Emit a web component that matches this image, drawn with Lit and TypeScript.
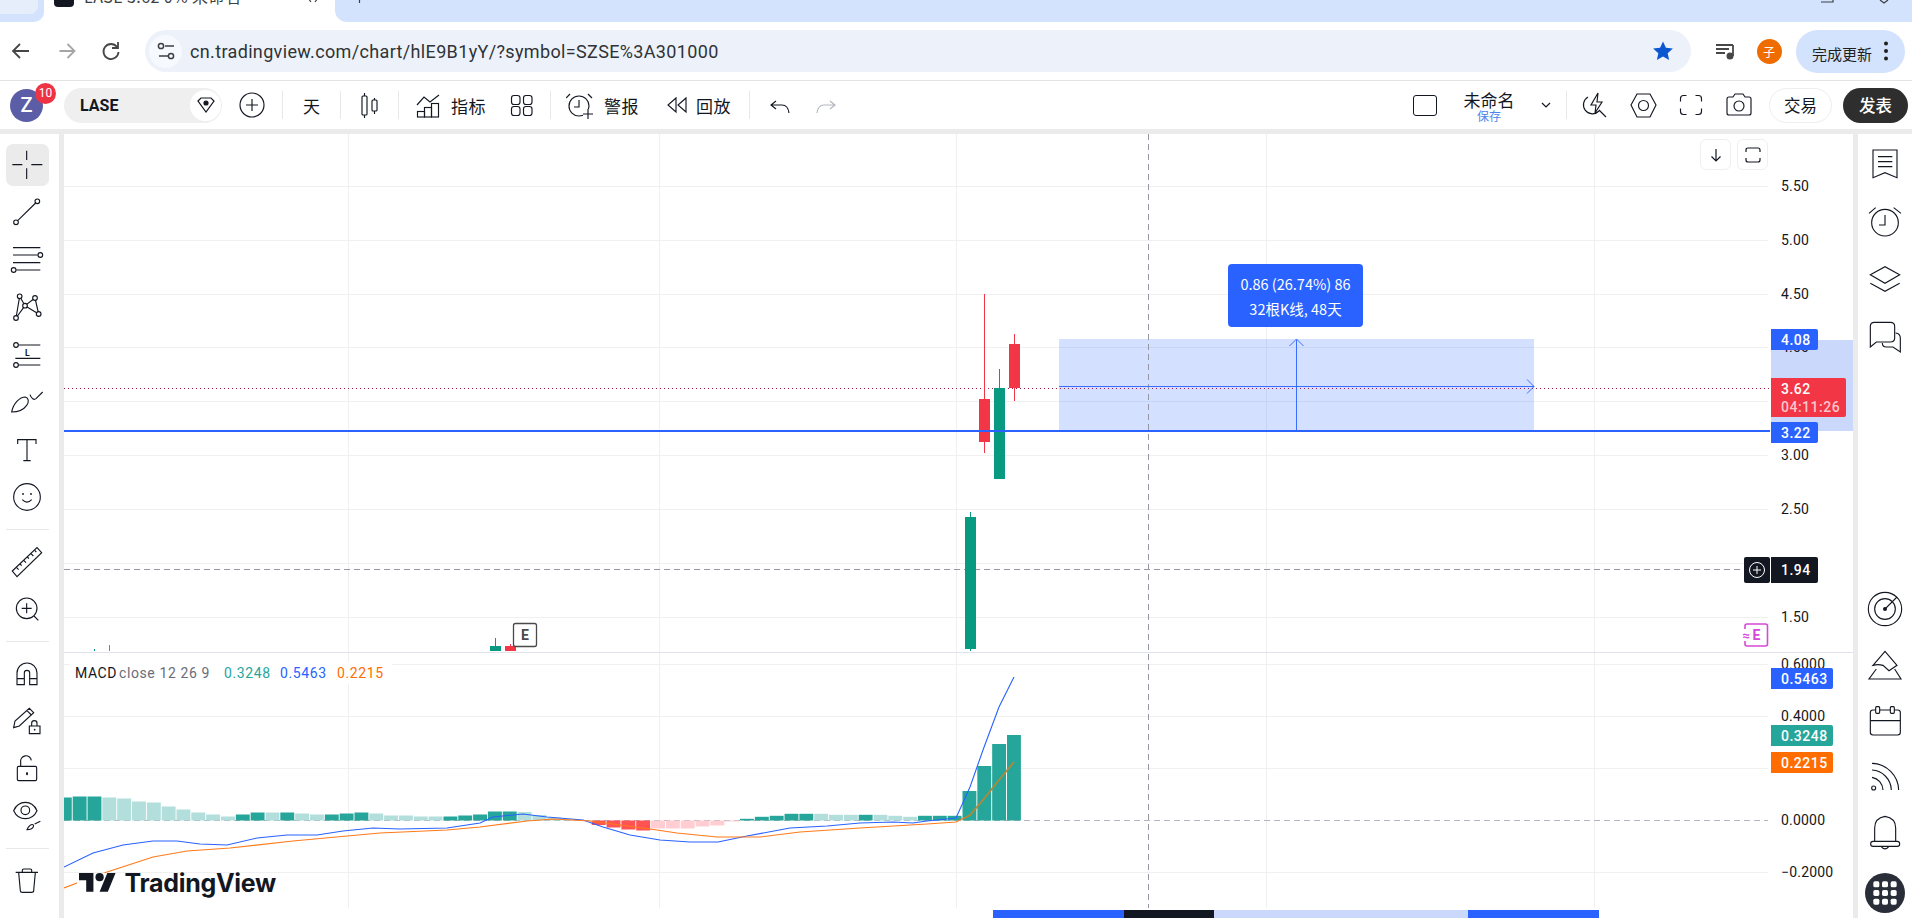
import { LitElement, html, css, svg } from "lit";
import { customElement } from "lit/decorators.js";

const tool = (cx: number, cy: number, body: unknown) => html`<svg class="zi" viewBox="${cx - 60} ${cy - 60} 120 120">${body}</svg>`;
const tb = (cx: number, cy: number, body: unknown) => html`<svg class="ti" viewBox="${cx - 14} ${cy - 14} 28 28">${body}</svg>`;

const leftA = [
  tool(82, 90, svg`<path d="M81 47V75M81 100V132M38 89H68M95 89H128"/>`),
  tool(80, 232, svg`<circle cx="47" cy="263" r="7"/><circle cx="111" cy="200" r="7"/><path d="M52 258L106 205"/>`),
  tool(80, 375, svg`<path d="M38 338H120M38 360H112M38 383H120M48 405H120"/><circle cx="120" cy="360" r="7"/><circle cx="40" cy="405" r="7"/>`),
  tool(80, 516, svg`<path d="M58 484L47 549M58 484L74 512M74 512L47 549M74 512L104 489M104 489L115 537M74 512L115 537"/><g fill="#fff"><circle cx="58" cy="484" r="7"/><circle cx="104" cy="489" r="7"/><circle cx="74" cy="512" r="7"/><circle cx="115" cy="537" r="7"/><circle cx="47" cy="549" r="7"/></g>`),
  tool(80, 660, svg`<path d="M54 630H120M45 670H120M54 690H120"/><circle cx="47" cy="630" r="7"/><circle cx="47" cy="690" r="7"/><text class="ltxt" x="81" y="662">L</text>`),
  tool(83, 805, svg`<path d="M37 835C42 808 62 790 78 790C88 792 90 805 82 815C70 832 55 835 37 835Z"/><path d="M92 783C96 795 104 800 110 795L130 775"/>`),
  tool(81, 943, svg`<path d="M53 925V912H108V925M81 912V975M70 975H92"/>`),
  tool(80, 1087, svg`<circle cx="80" cy="1087" r="40"/><circle class="f" cx="68" cy="1078" r="2.8"/><circle class="f" cx="92" cy="1078" r="2.8"/><path d="M66 1095Q80 1110 94 1095"/>`),
];
const leftB = [
  tool(80, 123, svg`<path d="M36 150L110 80L124 95L50 167Z"/><path d="M48 139L55 146M59 129L64 134M70 118L77 125M81 108L86 113M92 98L99 105M103 88L108 93"/>`),
  tool(76, 262, svg`<circle cx="75" cy="260" r="31"/><path d="M97 283L110 296M60 260H90M75 245V275"/>`),
];
const leftC = [
  tool(80, 458, svg`<path d="M50 490V455A30 30 0 0 1 110 455V490H88V455A8 8 0 0 0 72 455V490ZM50 472H72M88 472H110"/>`),
  tool(78, 600, svg`<path d="M38 620L42 600L85 562L98 575L55 615ZM78 569L91 582M85 615H117V638H85ZM92 615V607A8 8 0 0 1 108 607V615"/><circle class="f" cx="101" cy="626" r="2.5"/>`),
  tool(79, 743, svg`<path d="M54 735H104Q108 735 108 739V774Q108 778 104 778H54Q50 778 50 774V739Q50 735 54 735ZM60 735V722A16 16 0 0 1 92 717"/><ellipse class="f" cx="79" cy="757" rx="3" ry="5"/>`),
  tool(80, 884, svg`<path d="M40 868C55 835 95 835 110 868C95 900 55 900 40 868Z"/><circle cx="75" cy="867" r="13"/><path d="M80 925C84 915 92 908 98 910C102 914 98 920 92 923C88 925 84 925 80 925ZM103 908L120 900"/>`),
];
const leftD = [
  tool(80, 1076, svg`<path d="M46 1050H113M66 1050V1043Q66 1040 70 1040H90Q94 1040 94 1043V1050M55 1050L60 1105Q60 1110 66 1110H93Q100 1110 100 1105L105 1050"/>`),
];
const rightA = [
  tool(136, 102, svg`<path d="M100 60H172V143L136 128L100 143ZM115 80H158M115 95H158M115 110H158"/>`),
  tool(136, 271, svg`<circle cx="136" cy="273" r="40"/><path d="M136 250V280H118M88 245L108 228M162 228L184 245"/>`),
  tool(136, 445, svg`<path d="M92 432L136 408L180 432L136 458ZM92 458L136 482L180 458"/>`),
  tool(136, 622, svg`<path d="M92 590Q92 578 104 578H152Q165 578 165 590V625Q165 637 152 637H110L92 652ZM168 610Q182 612 182 625V667L160 652H140Q128 652 128 640"/>`),
];
const rightB = [
  tool(136, 268, svg`<circle cx="136" cy="268" r="50"/><circle cx="136" cy="268" r="31"/><circle class="f" cx="136" cy="268" r="6"/><path d="M136 268L172 232"/>`),
  tool(136, 431, svg`<path d="M100 432L136 390L172 432L148 448L130 432Q115 428 100 432ZM110 443L88 473H184L165 443"/>`),
  tool(136, 598, svg`<path d="M100 565H174Q182 565 182 573V632Q182 640 174 640H100Q92 640 92 632V573Q92 565 100 565ZM92 597H182"/><rect x="108" y="555" width="12" height="20" rx="3" fill="#fff"/><rect x="152" y="555" width="12" height="20" rx="3" fill="#fff"/>`),
  tool(136, 769, svg`<circle cx="102" cy="802" r="6"/><path d="M97 770A40 40 0 0 1 130 808M97 748A62 62 0 0 1 155 808M97 728A82 82 0 0 1 177 808"/>`),
  tool(136, 940, svg`<path d="M105 965V925Q105 895 136 890Q168 895 168 925V965"/><rect x="93" y="965" width="87" height="15" rx="7"/><path d="M124 980Q136 995 148 980"/>`),
];
const apps = tool(136, 1118, svg`<circle cx="136" cy="1118" r="60" class="dark"/><g class="wh">${[-26, 0, 26].map((dy) => [-26, 0, 26].map((dx) => svg`<rect x="${127 + dx}" y="${1109 + dy}" width="18" height="18" rx="5"/>`))}</g>`);

const hist: number[] = [23, 24, 24, 23, 22, 19, 18, 14, 11, 8, 6, 4, 6, 8, 8, 8, 7, 6, 6, 7, 8, 7, 5, 5, 4, 4, 4, 5, 6, 9, 9, 8.5, 5.5, 3, 1, 0.5, -4.5, -7, -9, -10, -8, -8, -8, -6, -5, -1, 1.7, 3.7, 4.7, 6.7, 6.7, 6.7, 5.7, 5.7, 5.7, 5.7, 4.7, 3.7, 4.7, 4.7, 4.7, 29.5, 54.5, 76.5, 85.5];
const light = new Set([3, 4, 5, 6, 7, 8, 9, 10, 11, 14, 16, 17, 21, 22, 23, 24, 25, 31, 32, 33, 34, 35, 51, 52, 53, 55, 56, 57]);
const pink = new Set([40, 41, 42, 43, 44, 45]);
const Z = 820.5;
const bars = hist.map((h, i) => {
  const x = 72.7 + (i - 1) * 14.83;
  const cls = h < 0 ? (pink.has(i) ? "#ffcdd2" : "#ff5252") : light.has(i) ? "#b2dfdb" : "#26a69a";
  const left = Math.max(64, x);
  const w = x + 13.9 - left;
  return svg`<rect x="${left}" y="${h < 0 ? Z : Z - h}" width="${w}" height="${Math.abs(h)}" fill="${cls}"/>`;
});

const blue = "64,867 93,853 123,845 153,841 177,841 200,844 227,845 257,838 287,835 317,835 343,831 373,828 400,829 447,828 480,823 493,817 523,814 547,817 583,820 603,827 630,835 660,840 690,842 718,842 747,836 790,828 827,826 860,823 893,822 913,823 927,821 956,818 970,787 983,750 999,707 1014,677";
const orange = "64,888 77,883 107,872 153,857 187,851 230,848 293,841 347,836 380,833 447,830 480,827 527,821 553,819 590,821 620,825 650,829 677,833 717,837 760,837 800,832 860,828 927,824 956,822 970,815 983,800 999,780 1014,762";

const hGrid = [186, 240, 294, 347, 401, 455, 509, 563, 617, 664, 716, 768, 872];
const vGrid = [348, 659, 956, 1266, 1594];
const axis: [string, number][] = [["5.50", 186], ["5.00", 240], ["4.50", 294], ["4.00", 347], ["3.50", 401], ["3.00", 455], ["2.50", 509], ["2.00", 563], ["1.50", 617], ["0.6000", 664], ["0.4000", 716], ["0.0000", 820], ["−0.2000", 872]];
const tags: [string, number, number, string][] = [
  ["4.08", 329, 47, "#2962ff"], ["3.22", 422, 47, "#2962ff"],
  ["0.5463", 668, 62, "#2962ff"], ["0.3248", 725, 62, "#26a69a"], ["0.2215", 752, 62, "#ff6d00"],
];
const candles: [number, number, number, number, number, string][] = [
  [970.5, 512, 651, 517, 649, "#089981"],
  [984.5, 294, 453, 399, 442, "#f23645"],
  [999.5, 369, 479, 388, 479, "#089981"],
  [1014.5, 334, 401, 344, 388, "#f23645"],
  [495.5, 638, 651, 646, 651, "#089981"],
  [510.5, 644, 651, 646, 651, "#f23645"],
];

@customElement("app-root")
export class AppRoot extends LitElement {
  static styles = css`
    :host { display: flex; flex-direction: column; width: 1912px; height: 918px; overflow: hidden; background: #ebebeb; font-family: "Noto Sans CJK SC", Roboto, sans-serif; color: #131722; }
    svg { display: block; flex: none; }
    .zi { width: 40px; height: 40px; fill: none; stroke: #131722; stroke-width: 3.4; }
    .ti { width: 28px; height: 28px; fill: none; stroke: #131722; stroke-width: 1.15; }
    .f { fill: #131722; stroke: none; }
    .dark { fill: #2a2e39; stroke: none; }
    .wh { fill: #fff; stroke: none; }
    .ltxt { font: 700 26px Roboto, sans-serif; fill: #131722; stroke: none; text-anchor: middle; }

    .tabs { display: flex; height: 22px; background: #fff; flex: none; overflow: hidden; }
    .tl { width: 44px; background: #d3e3fd; border-bottom-right-radius: 10px; }
    .stub { width: 38px; height: 14px; background: #e6eefc; border-bottom-right-radius: 8px; }
    .tab { width: 291px; display: flex; align-items: flex-start; padding-left: 10px; box-sizing: border-box; }
    .fav { width: 20px; height: 20px; margin-top: -13px; background: #131722; border-radius: 4px; }
    .ttl { font-size: 16px; line-height: 20px; margin: -14px 0 0 10px; color: #3c4043; white-space: nowrap; letter-spacing: .4px; width: 150px; }
    .tr { flex: 1; background: #d3e3fd; border-bottom-left-radius: 12px; }
    .tr svg { width: 1577px; height: 6px; fill: none; stroke: #3c4043; stroke-width: 1.2; }
    .tx { width: 14px; height: 4px; margin-left: 72px; fill: none; stroke: #3c4043; stroke-width: 1.2; }

    .addr { display: flex; align-items: center; height: 58px; background: #fff; border-bottom: 1px solid #e3e3e3; box-sizing: content-box; flex: none; padding-left: 9px; }
    .ai { width: 24px; height: 24px; fill: none; stroke: #474747; stroke-width: 1.8; }
    .ai.off { stroke: #a5a5a5; }
    .ml-fw { margin-left: 21.5px; }
    .ml-re { margin-left: 20.5px; }
    .pill { flex: 1; margin-left: 22px; height: 42px; background: #edf2fa; border-radius: 21px; display: flex; align-items: center; padding: 0 17px 0 4px; box-sizing: border-box; }
    .site { width: 33px; height: 33px; border-radius: 50%; background: #f6f9fe; display: flex; align-items: center; justify-content: center; }
    .site svg { width: 20px; height: 20px; fill: none; stroke: #3c4043; stroke-width: 1.5; }
    .url { margin-left: 8px; font: 18px Roboto, sans-serif; color: #2f3336; flex: 1; white-space: nowrap; letter-spacing: .35px; }
    .star { width: 22px; height: 22px; fill: #0b57d0; }
    .music { width: 24px; height: 24px; margin-left: 22px; fill: none; stroke: #474747; stroke-width: 1.8; }
    .ava { width: 25px; height: 25px; border-radius: 50%; background: #ef6c00; color: #fff; font-size: 12px; display: flex; align-items: center; justify-content: center; margin-left: 19.5px; }
    .upd { width: 109px; height: 43px; margin: 0 7px 0 14.5px; background: #d3e3fd; border-radius: 22px; display: flex; align-items: center; padding-left: 16px; box-sizing: border-box; font-size: 15px; color: #1f1f1f; }
    .upd span { padding-top: 4px; }
    .upd svg { width: 6px; height: 22px; margin-left: 11px; fill: #1f1f1f; }

    .tb { display: flex; align-items: center; height: 48px; background: #fff; flex: none; padding-left: 10px; font-size: 17px; }
    .avatar { position: relative; width: 33px; height: 33px; border-radius: 50%; background: #5b5ea6; color: #fff; font: 500 20px Roboto, sans-serif; display: flex; align-items: center; justify-content: center; }
    .badge { position: absolute; left: 25px; top: -6px; width: 21px; height: 21px; border-radius: 50%; background: #ee3344; font: 12px Roboto, sans-serif; display: flex; align-items: center; justify-content: center; }
    .sym { width: 158px; height: 35px; margin-left: 21px; background: #efefef; border-radius: 18px; display: flex; align-items: center; justify-content: space-between; padding: 0 1px 0 16px; box-sizing: border-box; font: 700 16px Roboto, sans-serif; }
    .sym div { width: 31px; height: 31px; border-radius: 50%; background: #fff; display: flex; align-items: center; justify-content: center; }
    .sym svg { width: 20px; height: 16px; fill: none; stroke: #131722; stroke-width: 1.2; }
    .add { width: 60px; display: flex; justify-content: center; }
    .sep { width: 1px; height: 28px; background: #e8e8e8; flex: none; }
    .cell { width: 57px; display: flex; justify-content: center; }
    .lbl { width: 35px; letter-spacing: .5px; white-space: nowrap; }
    .in-a { margin-left: 15px; }
    .gap9 { margin-left: 9px; }
    .tpl { margin: 0 15px 0 21px; }
    .gap10 { margin-left: 10px; }
    .rep { margin-left: 24px; }
    .gap5 { margin-left: 5px; }
    .end18 { margin-right: 18px; }
    .redo { margin-left: 19px; }
    .right { margin-left: auto; display: flex; align-items: center; padding-right: 4px; }
    .sq { width: 24px; height: 21px; border: 1.2px solid #131722; border-radius: 3px; box-sizing: border-box; }
    .name { width: 60px; margin-left: 22px; padding-top: 4px; display: flex; flex-direction: column; align-items: center; line-height: 17px; }
    .name small { font-size: 12px; line-height: 15px; color: #4d84ee; }
    .chev { width: 14px; height: 14px; margin: 0 13px 0 20px; fill: none; stroke: #131722; stroke-width: 1.2; }
    .icons { display: flex; gap: 20px; margin-left: 14px; }
    .trade { width: 63px; height: 35px; margin-left: 16px; border: 1px solid #eee; border-radius: 18px; box-sizing: border-box; display: flex; align-items: center; justify-content: center; font-size: 16.5px; }
    .pub { width: 65px; height: 35px; margin-left: 11px; background: #2e2e2e; color: #fff; border-radius: 18px; display: flex; align-items: center; justify-content: center; font-size: 16.5px; font-weight: 500; }

    .body { flex: 1; display: flex; padding-top: 5px; min-height: 0; }
    .left { width: 59px; background: #fff; padding: 7px 5px 0 0; box-sizing: border-box; display: flex; flex-direction: column; align-items: center; flex: none; }
    .t { width: 43px; height: 47.5px; display: flex; align-items: center; justify-content: center; flex: none; }
    .t.active { height: 42px; margin: 2.75px 0; background: #ebebeb; border-radius: 7px; }
    .ls { width: 43px; height: 1px; background: #e8e8e8; margin: 8px 0; flex: none; }
    .chart { position: relative; width: 1789px; margin-left: 5px; background: #fff; flex: none; }
    .chart > svg { width: 1789px; height: 784px; }
    .scales { position: absolute; top: 5px; left: 1636px; display: flex; gap: 6px; }
    .scales div { width: 29px; height: 29px; border: 1px solid #f0f0f0; border-radius: 6px; display: flex; align-items: center; justify-content: center; }
    .scales svg { width: 20px; height: 20px; fill: none; stroke: #131722; stroke-width: 1.2; }
    .rightbar { width: 54px; margin-left: 5px; background: #fff; display: flex; flex-direction: column; align-items: center; flex: none; padding-top: 1.5px; box-sizing: border-box; }
    .r { height: 57.5px; display: flex; align-items: center; justify-content: center; flex: none; }
    .rb { margin-top: auto; margin-bottom: -3px; }
    .rb .r { height: 56px; }
    .rb .r.last { margin-top: 4px; }

    .c-g { stroke: #f0f0f0; stroke-width: 1; fill: none; }
    .c-sep { stroke: #e0e3eb; stroke-width: 1; }
    .c-t { font: 14px Roboto, sans-serif; fill: #131722; dominant-baseline: central; letter-spacing: .2px; }
    .c-w { font: 14px Roboto, sans-serif; fill: #fff; dominant-baseline: central; }
    .c-b { font-weight: 500; letter-spacing: .5px; }
    .c-dim { fill: #fbc5cb; }
    .c-mid { font: 14.5px "Noto Sans CJK SC", Roboto, sans-serif; fill: #fff; text-anchor: middle; dominant-baseline: central; }
    .leg { font: 14px Roboto, sans-serif; dominant-baseline: central; letter-spacing: .6px; }
    .logo { font: 700 25px Inter, Roboto, sans-serif; fill: #131722; letter-spacing: -.3px; }
    .c-e { font: 700 14px Roboto, sans-serif; text-anchor: middle; dominant-baseline: central; }
    .c-ap { font: 700 13px Roboto, sans-serif; text-anchor: middle; dominant-baseline: central; }
  `;

  private chart() {
    return svg`
      <g class="c-g">
        ${hGrid.map((y) => svg`<path d="M64 ${y + 0.5}H1768"/>`)}
        ${vGrid.map((x) => svg`<path d="M${x + 0.5} 134V908"/>`)}
      </g>
      <path class="c-sep" d="M64 652.5H1853"/>
      <rect x="1771" y="340" width="82" height="91" fill="#c9d8fb"/>
      ${axis.map(([t, y]) => svg`<text class="c-t" x="1781" y="${y}">${t}</text>`)}

      <rect x="1059" y="339" width="475" height="92" fill="#2962ff" fill-opacity=".2"/>
      <path d="M64 388.5H1770" stroke="#9c1c4a" stroke-dasharray="1 3"/>
      <path d="M1148.5 134V908" stroke="#9598a1" stroke-dasharray="6 4"/>
      <path d="M64 569.5H1745" stroke="#9598a1" stroke-dasharray="6 4"/>
      <path d="M64 820.5H1768" stroke="#b2b5be" stroke-dasharray="6 4"/>

      ${candles.map(([x, w1, w2, b1, b2, c]) => svg`<path d="M${x} ${w1}V${w2}" stroke="${c}"/><rect x="${x - 5.5}" y="${b1}" width="11" height="${b2 - b1}" fill="${c}"/>`)}
      <path d="M94.5 649V651" stroke="#089981"/><path d="M109.5 645V651" stroke="#e0508a"/>
      <rect x="513.5" y="623.5" width="23" height="23" rx="2" fill="#fff" stroke="#4a4a4a" stroke-width="1.3"/>
      <text class="c-e" x="525" y="635" fill="#4a4a4a">E</text>

      <path d="M64 431H1770" stroke="#2962ff" stroke-width="2"/>
      <path d="M1296.5 431V340M1289.5 346L1296.5 339L1303.5 346M1059 386.5H1534M1527 379.5L1534 386.5L1527 393.5" stroke="#2962ff" fill="none" stroke-opacity=".9"/>
      <rect x="1228" y="264" width="135" height="63" rx="4" fill="#2962ff"/>
      <text class="c-mid" x="1295.5" y="283">0.86 (26.74%) 86</text>
      <text class="c-mid" x="1295.5" y="308">32根K线, 48天</text>

      ${bars}
      <polyline points="${blue}" fill="none" stroke="#2962ff" stroke-width="1.1"/>
      <polyline points="${orange}" fill="none" stroke="#ff7a1a" stroke-width="1.2"/>
      <polyline points="963,819 970,815 983,800 999,780 1014,762" fill="none" stroke="#a98a3c" stroke-width="1.6"/>

      <rect x="70" y="662" width="322" height="22" fill="#fff"/>
      <text class="leg" x="75" y="673" fill="#131722" letter-spacing="0">MACD</text>
      <text class="leg" x="119" y="673" fill="#6a6d78">close 12 26 9</text>
      <text class="leg" x="224" y="673" fill="#26a69a">0.3248</text>
      <text class="leg" x="280" y="673" fill="#2962ff">0.5463</text>
      <text class="leg" x="337" y="673" fill="#ff6d00">0.2215</text>

      <rect x="77" y="873" width="203" height="27" fill="#fff"/>
      <g transform="translate(79 869) scale(1.03)" fill="#131722"><path d="M14 22H7V11H0V4h14v18zM28 22h-8l7.5-18h8L28 22z"/><circle cx="20" cy="8" r="4"/></g>
      <text class="logo" x="124.5" y="892">TradingView</text>

      <g fill="none" stroke="#d648d8" stroke-width="1.6"><rect x="1745" y="624" width="22.5" height="22" rx="2"/></g>
      <rect x="1743" y="629" width="6" height="12" fill="#fff"/>
      <text class="c-e" x="1756.5" y="635" fill="#d648d8">E</text>
      <text class="c-ap" x="1746" y="635" fill="#d648d8">≈</text>

      ${tags.map(([t, y, w, c]) => svg`<path d="M1771 ${y}H${1771 + w - 2}Q${1771 + w} ${y} ${1771 + w} ${y + 2}V${y + 19}Q${1771 + w} ${y + 21} ${1771 + w - 2} ${y + 21}H1771Z" fill="${c}"/><text class="c-w c-b" x="1781" y="${y + 10.5}">${t}</text>`)}
      <path d="M1771 378H1844Q1846 378 1846 380V415Q1846 417 1844 417H1771Z" fill="#f23645"/>
      <text class="c-w c-b" x="1781" y="388.5">3.62</text>
      <text class="c-w c-b c-dim" x="1781" y="406.5">04:11:26</text>

      <rect x="1744" y="557" width="26" height="26" rx="2" fill="#131722"/>
      <circle cx="1757" cy="570" r="7.5" fill="none" stroke="#fff"/>
      <path d="M1753 570H1761M1757 566V574" stroke="#fff"/>
      <path d="M1771 557H1816Q1818 557 1818 559V581Q1818 583 1816 583H1771Z" fill="#131722"/>
      <text class="c-w c-b" x="1781" y="570">1.94</text>

      <rect x="993" y="910" width="131" height="8" fill="#2962ff"/>
      <rect x="1124" y="910" width="90" height="8" fill="#131722"/>
      <rect x="1214" y="910" width="254" height="8" fill="#c9d8fb"/>
      <rect x="1468" y="910" width="131" height="8" fill="#2962ff"/>
    `;
  }

  render() {
    return html`
      <div class="tabs">
        <div class="tl"><div class="stub"></div></div>
        <div class="tab">
          <div class="fav"></div>
          <div class="ttl">LASE 3.62 0% 未命名</div>
          <svg class="tx" viewBox="0 0 14 4"><path d="M2 -2L5 2M12 -2L9 2"/></svg>
        </div>
        <div class="tr"><svg viewBox="335 0 1577 6"><path d="M359.5 0V3M1821 2H1833V0M1880 0L1884 3L1888 0"/></svg></div>
      </div>

      <div class="addr">
        <svg class="ai" viewBox="9 39 24 24"><path d="M29 51H13M20 44L13 51L20 58"/></svg>
        <svg class="ai off ml-fw" viewBox="54.5 39 24 24"><path d="M59 51H74M67 44L74 51L67 58"/></svg>
        <svg class="ai ml-re" viewBox="99 39 24 24"><path d="M117 47A7.5 7.5 0 1 0 118.5 52M118 42V48H112"/></svg>
        <div class="pill">
          <div class="site"><svg viewBox="155 41 20 20"><circle cx="160" cy="46" r="2.6"/><path d="M164 46H173M158 56H167"/><circle cx="170" cy="56" r="2.6"/></svg></div>
          <div class="url">cn.tradingview.com/chart/hlE9B1yY/?symbol=SZSE%3A301000</div>
          <svg class="star" viewBox="0 0 24 24"><path d="M12 1.5l3.2 7 7.6.8-5.7 5.1 1.6 7.5L12 18.1l-6.7 3.8 1.6-7.5L1.2 9.3l7.6-.8z"/></svg>
        </div>
        <svg class="music" viewBox="1713 38 24 24"><path d="M1716 44H1733M1716 48H1729M1716 52H1725M1733 44V55"/><circle cx="1730" cy="55" r="2.6" fill="#474747"/></svg>
        <div class="ava">子</div>
        <div class="upd"><span>完成更新</span><svg viewBox="0 0 6 22"><circle cx="3" cy="3.5" r="2"/><circle cx="3" cy="11" r="2"/><circle cx="3" cy="18.5" r="2"/></svg></div>
      </div>

      <div class="tb">
        <div class="avatar">Z<div class="badge">10</div></div>
        <div class="sym">LASE<div><svg viewBox="196 97 20 16"><path d="M198 101L201 98H211L214 101L206 112Z"/><circle cx="206" cy="103" r="2" fill="#131722"/></svg></div></div>
        <div class="add">${tb(252, 105, svg`<circle cx="252" cy="105" r="12"/><path d="M246 105H258M252 99V111"/>`)}</div>
        <div class="sep"></div>
        <div class="cell">天</div>
        <div class="sep"></div>
        <div class="cell">${tb(370, 104, svg`<path d="M364.5 92V95M364.5 114V117M374.5 97V99M374.5 110V113"/><rect x="362" y="95" width="5" height="19" rx="1"/><rect x="372" y="99" width="5" height="11" rx="1"/>`)}</div>
        <div class="sep"></div>
        <div class="in-a">${tb(428, 104, svg`<path d="M417 104L424 96L430 101L439 94"/><rect x="417.5" y="110.5" width="7" height="5.5"/><rect x="424.5" y="106.5" width="7" height="9.5"/><rect x="431.5" y="102.5" width="7" height="13.5"/>`)}</div>
        <div class="lbl gap9">指标</div>
        <div class="tpl">${tb(521, 105, svg`<rect x="511.5" y="95.5" width="8.5" height="9" rx="2.5"/><rect x="523.5" y="95.5" width="8.5" height="9" rx="2.5"/><rect x="511.5" y="106.5" width="8.5" height="9" rx="2.5"/><rect x="523.5" y="106.5" width="8.5" height="9" rx="2.5"/>`)}</div>
        <div class="sep"></div>
        <div class="in-a">${tb(580, 104, svg`<circle cx="579" cy="105" r="10"/><path d="M579 99V106H574M570 93L566 97M588 93L592 97"/><rect x="583" y="108" width="10" height="10" fill="#fff" stroke="none"/><path d="M588 108V118M583 113H593"/>`)}</div>
        <div class="lbl gap10">警报</div>
        <div class="rep">${tb(677, 105, svg`<path d="M676 98L668 105L676 112ZM686 98L678 105L686 112Z"/>`)}</div>
        <div class="lbl gap5 end18">回放</div>
        <div class="sep"></div>
        <div class="in-a">${tb(779, 105, svg`<path d="M776 101L771 105L776 109M771 105H782Q788 105 789 113"/>`)}</div>
        <div class="redo">${tb(826, 105, svg`<path stroke="#b2b5be" d="M830 101L835 105L830 109M835 105H824Q818 105 817 113"/>`)}</div>

        <div class="right">
          <div class="sq"></div>
          <div class="name">未命名<small>保存</small></div>
          <svg class="chev" viewBox="1540 97 14 14"><path d="M1543 102L1547 106L1551 102"/></svg>
          <div class="sep"></div>
          <div class="icons">
            ${tb(1596, 104, svg`<path d="M1589 96A9 9 0 1 0 1600 110M1599 92L1592 104H1597L1596 112L1603 101H1598ZM1600 109L1607 116"/>`)}
            ${tb(1644, 104, svg`<path d="M1632 104L1638 93H1651L1657 104L1651 116H1638Z"/><circle cx="1644.5" cy="104.5" r="5"/>`)}
            ${tb(1691.5, 104.5, svg`<path d="M1681 101V98Q1681 95 1684 95H1687M1696 95H1699Q1702 95 1702 98V101M1702 108V111Q1702 114 1699 114H1696M1687 114H1684Q1681 114 1681 111V108"/>`)}
            ${tb(1739, 104, svg`<path d="M1727 98Q1727 96 1729 96H1733L1735 93H1743L1745 96H1749Q1751 96 1751 98V112Q1751 114 1749 114H1729Q1727 114 1727 112Z"/><circle cx="1739" cy="105" r="5"/>`)}
          </div>
          <div class="trade">交易</div>
          <div class="pub">发表</div>
        </div>
      </div>

      <div class="body">
        <div class="left">
          <div class="t active">${leftA[0]}</div>
          ${leftA.slice(1).map((i) => html`<div class="t">${i}</div>`)}
          <div class="ls"></div>
          ${leftB.map((i) => html`<div class="t">${i}</div>`)}
          <div class="ls"></div>
          ${leftC.map((i) => html`<div class="t">${i}</div>`)}
          <div class="ls"></div>
          ${leftD.map((i) => html`<div class="t">${i}</div>`)}
        </div>
        <div class="chart">
          <svg viewBox="64 134 1789 784">${this.chart()}</svg>
          <div class="scales">
            <div><svg viewBox="0 0 20 20"><path d="M10 4V16M5.5 11.5L10 16L14.5 11.5"/></svg></div>
            <div><svg viewBox="0 0 20 20"><path d="M3 7V5Q3 3 5 3H15Q17 3 17 5V7M3 13V15Q3 17 5 17H15Q17 17 17 15V13"/></svg></div>
          </div>
        </div>
        <div class="rightbar">
          ${rightA.map((i) => html`<div class="r">${i}</div>`)}
          <div class="rb">${rightB.map((i) => html`<div class="r">${i}</div>`)}<div class="r last">${apps}</div></div>
        </div>
      </div>
    `;
  }
}
